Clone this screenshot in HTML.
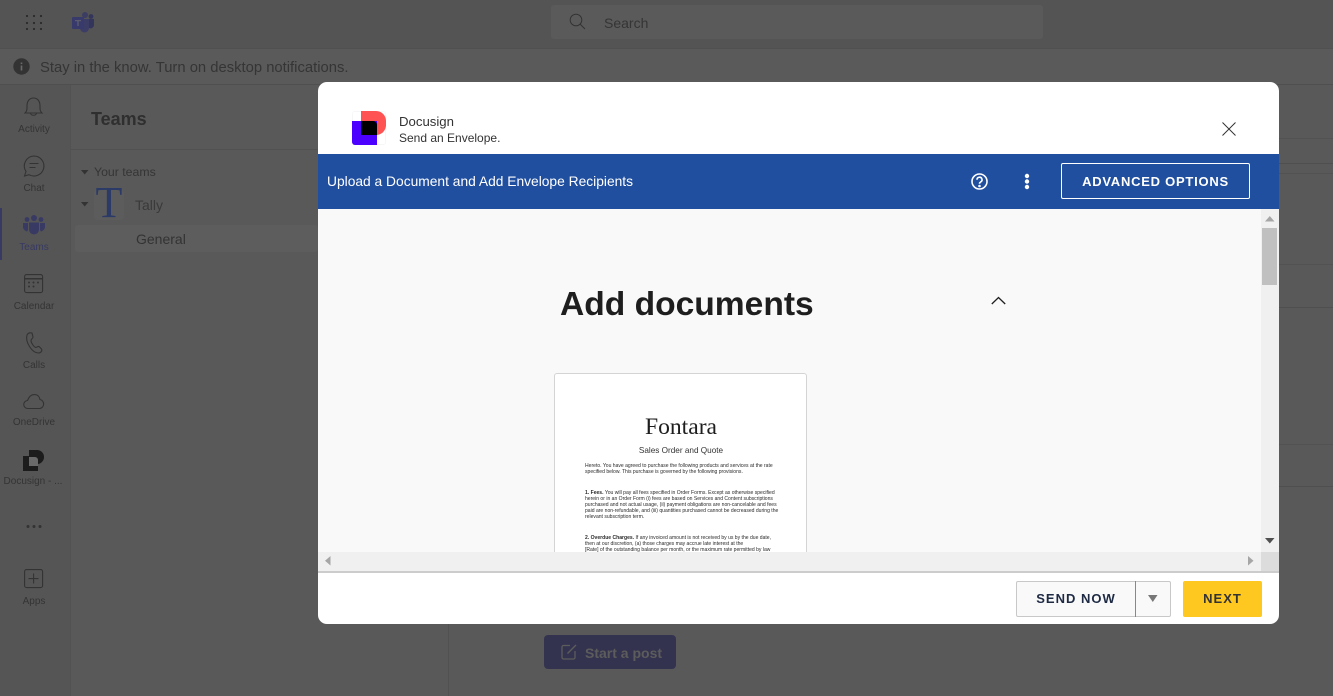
<!DOCTYPE html>
<html><head><meta charset="utf-8"><style>
html,body{margin:0;padding:0}
body{width:1333px;height:696px;overflow:hidden;background:#595959;position:relative;font-family:"Liberation Sans",sans-serif}
div,span{position:absolute;white-space:nowrap}
svg{position:absolute;overflow:visible}
.nav{left:0;width:68px;text-align:center;font-size:10px;color:#343434;line-height:12px}
.dk{color:#2f2f2f}
.doc{left:267px;font-size:5.050px;line-height:5.900px;color:#2a2a2a;filter:blur(.25px)}
</style></head><body>
<div style="left:0;top:0;width:1333px;height:48px;background:#545454;border-bottom:1px solid #505050"></div>
<div style="left:0;top:49px;width:1333px;height:35px;background:#5a5a5a;border-bottom:1px solid #4f4f4f"></div>
<div style="left:0;top:85px;width:70px;height:611px;background:#555;border-right:1px solid #525252"></div>
<div style="left:71px;top:149px;width:378px;height:1px;background:#515151"></div>
<div style="left:448px;top:85px;width:1px;height:611px;background:#515151"></div>
<div style="left:1279px;top:138px;width:54px;height:1px;background:#525252"></div>
<div style="left:1279px;top:163px;width:54px;height:1px;background:#4f4f4f"></div>
<div style="left:1279px;top:173px;width:54px;height:1px;background:#525252"></div>
<div style="left:1279px;top:264px;width:54px;height:1px;background:#525252"></div>
<div style="left:1279px;top:307px;width:54px;height:1px;background:#4f4f4f"></div>
<div style="left:1279px;top:444px;width:54px;height:1px;background:#525252"></div>
<div style="left:1279px;top:486px;width:54px;height:1px;background:#4f4f4f"></div>

<svg style="left:26px;top:15px" width="16" height="16" fill="#2b2b2b"><circle cx="1" cy="1" r="1.100"/><circle cx="8" cy="1" r="1.100"/><circle cx="15" cy="1" r="1.100"/><circle cx="1" cy="8" r="1.100"/><circle cx="8" cy="8" r="1.100"/><circle cx="15" cy="8" r="1.100"/><circle cx="1" cy="14" r="1.100"/><circle cx="8" cy="14" r="1.100"/><circle cx="15" cy="14" r="1.100"/></svg>
<svg style="left:72px;top:12px" width="22" height="20"><circle cx="13" cy="3" r="3" fill="#3c3d62"/><circle cx="19" cy="4.500" r="2.400" fill="#34355a"/><path d="M8 7h9v9a4.500 4.500 0 0 1-9 0z" fill="#3c3d66"/><path d="M17 7h5v6a3.500 3.500 0 0 1-5 3z" fill="#34355a"/><rect x="0" y="5" width="12" height="12" rx="1" fill="#373a6b"/><path d="M3 8h6v1.300H6.700V14H5.300V9.300H3z" fill="#5c5c6e"/></svg>
<div style="left:551px;top:5px;width:492px;height:34px;border-radius:3px;background:#5a5a5a"></div>
<svg style="left:569px;top:13px" width="17" height="17" fill="none" stroke="#333" stroke-width="1"><circle cx="7" cy="7" r="5.800"/><path d="M11 11l5 5"/></svg>
<div style="left:604px;top:14px;font-size:14px;line-height:18px;color:#353535">Search</div>

<svg style="left:13px;top:58px" width="17" height="17"><circle cx="8.500" cy="8.500" r="8.200" fill="#333"/><rect x="7.700" y="7.500" width="1.600" height="5" fill="#6a6a6a"/><rect x="7.700" y="4.500" width="1.600" height="1.600" fill="#6a6a6a"/></svg>
<div style="left:40px;top:59px;font-size:14.800px;line-height:18px;color:#353535">Stay in the know. Turn on desktop notifications.</div>

<svg style="left:23px;top:96px" width="21" height="22" fill="none" stroke="#333" stroke-width="1.100"><path d="M2 17c2-2 2-3 2-7 0-5 2.500-8 6.500-8s6.500 3 6.500 8c0 4 0 5 2 7z"/><path d="M7.500 17c0 3 6 3 6 0"/></svg>
<div class="nav" style="top:124px">Activity</div>
<svg style="left:23px;top:155px" width="22" height="22" fill="none" stroke="#333" stroke-width="1.100"><path d="M11 1a10 10 0 1 1-5 18.700L1.500 21 3 16.500A10 10 0 0 1 11 1z"/><path d="M6.500 8.500h9M6.500 12.500h6"/></svg>
<div class="nav" style="top:183px">Chat</div>
<div style="left:0;top:208px;width:2px;height:52px;background:#383a63"></div>
<svg style="left:23px;top:215px" width="22" height="20" fill="#383a63"><circle cx="11" cy="3" r="3"/><circle cx="4" cy="4.500" r="2.400"/><circle cx="18" cy="4.500" r="2.400"/><path d="M6 7.500h10v7a5 5 0 0 1-10 0z"/><path d="M0 8h5v7l-1 1.500C2 16 0 14 0 12zM22 8h-5v7l1 1.500c2-.5 4-2.500 4-4.500z"/></svg>
<div class="nav" style="top:242px;color:#383a63">Teams</div>
<svg style="left:24px;top:274px" width="20" height="20" fill="none" stroke="#333" stroke-width="1.100"><rect x=".6" y=".6" width="18" height="18" rx="2"/><path d="M.6 4.800h18" stroke-width="1.500"/><g fill="#333" stroke="none"><circle cx="5" cy="8.500" r="1"/><circle cx="9.500" cy="8.500" r="1"/><circle cx="14" cy="8.500" r="1"/><circle cx="5" cy="12.500" r="1"/><circle cx="9.500" cy="12.500" r="1"/></g></svg>
<div class="nav" style="top:301px">Calendar</div>
<svg style="left:25px;top:332px" width="18" height="22" fill="none" stroke="#333" stroke-width="1.100"><path d="M2 3c1-2 3-2.500 5-2l1 4c0 1.500-2 2-2 3.500 0 2 2.500 6 4.500 7 1.500 0 2-1.500 3.500-1l2.500 2.500c1 1.500-.5 4-3 4C7 21 0 10 2 3z"/></svg>
<div class="nav" style="top:360px">Calls</div>
<svg style="left:23px;top:394px" width="22" height="15" fill="none" stroke="#333" stroke-width="1.100"><path d="M5 14.500a4 4 0 0 1-.5-8C6 2.500 8.500.5 11.500.6c3 0 5 2 5.500 4.900a4.600 4.600 0 0 1 0 9z"/></svg>
<div class="nav" style="top:417px">OneDrive</div>
<svg style="left:23px;top:450px" width="21" height="21"><path d="M6 0h8a7 7 0 0 1 7 7 7 7 0 0 1-6 7V6H6z" fill="#1c1c1c"/><path d="M0 6h15v15H0z" fill="#1c1c1c"/><path d="M6 7h6a3 3 0 0 1 3 3v6H6z" fill="#6a6a6a"/></svg>
<div class="nav" style="top:476px;left:-1px">Docusign - ...</div>
<svg style="left:26px;top:524px" width="16" height="5" fill="#333"><circle cx="2" cy="2.500" r="1.500"/><circle cx="8" cy="2.500" r="1.500"/><circle cx="14" cy="2.500" r="1.500"/></svg>
<svg style="left:24px;top:569px" width="20" height="20" fill="none" stroke="#333" stroke-width="1.100"><rect x=".6" y=".6" width="18" height="18" rx="2"/><path d="M9.600 4.500v10M4.500 9.600h10"/></svg>
<div class="nav" style="top:596px">Apps</div>

<div class="dk" style="left:91px;top:108px;font-size:18px;line-height:22px;font-weight:700">Teams</div>
<svg style="left:81px;top:170px" width="8" height="5" fill="#333"><path d="M0 0h7.500L3.700 4.500z"/></svg>
<div style="left:94px;top:165px;font-size:12.300px;line-height:15px;color:#353535">Your teams</div>
<svg style="left:81px;top:202px" width="8" height="5" fill="#333"><path d="M0 0h7.500L3.700 4.500z"/></svg>
<div style="left:94px;top:190px;width:30px;height:30px;background:#5c5c5c;border-radius:3px"></div>
<div style="left:93px;top:180px;width:32px;text-align:center;font-family:'Liberation Serif',serif;font-size:44px;line-height:46px;color:#2b3a66">T</div>
<div style="left:135px;top:197px;font-size:14px;line-height:17px;color:#3a3a3a">Tally</div>
<div style="left:75px;top:225px;width:243px;height:27px;background:#5d5d5d;border-radius:3px"></div>
<div style="left:136px;top:231px;font-size:14px;line-height:17px;color:#333">General</div>

<div style="left:544px;top:635px;width:132px;height:34px;border-radius:4px;background:#33334f"></div>
<svg style="left:561px;top:644px" width="16" height="16" fill="none" stroke="#5c5c5c" stroke-width="1.300"><path d="M9 1.500H2.500A1.500 1.500 0 0 0 1 3v10.500A1.500 1.500 0 0 0 2.500 15h10a1.500 1.500 0 0 0 1.500-1.500V7"/><path d="M6.500 9.500L15 1"/></svg>
<div style="left:585px;top:645px;font-size:14px;line-height:17px;font-weight:700;color:#5c5c5c">Start a post</div>

<!-- modal -->
<div style="left:318px;top:82px;width:961px;height:542px;background:#fff;border-radius:9px;overflow:hidden">
  <svg style="left:34px;top:29px" width="34" height="34">
    <rect x=".25" y=".25" width="33.500" height="33.500" rx="3" fill="#fff" stroke="#eee" stroke-width=".5"/>
    <path d="M9 0h15a10 10 0 0 1 10 10v4a10 10 0 0 1-10 10H9z" fill="#ff5252"/>
    <path d="M0 10h25v24H3a3 3 0 0 1-3-3z" fill="#4c00ff"/>
    <path d="M9 10h12a4 4 0 0 1 4 4v10H9z" fill="#000"/>
  </svg>
  <div style="left:81px;top:31px;font-size:13.200px;line-height:17px;color:#333">Docusign</div>
  <div style="left:81px;top:48px;font-size:12px;line-height:16px;color:#333">Send an Envelope.</div>
  <svg style="left:904px;top:40px" width="14" height="14" fill="none" stroke="#333" stroke-width="1"><path d="M.5.500l13 13M13.500.500l-13 13"/></svg>

  <div style="left:0;top:72px;width:961px;height:55px;background:#214f9f"></div>
  <div style="left:9px;top:91px;font-size:13.800px;line-height:17px;color:#fff">Upload a Document and Add Envelope Recipients</div>
  <svg style="left:653px;top:91px" width="17" height="17" fill="none" stroke="#fff" stroke-width="1.600"><circle cx="8.500" cy="8.500" r="7.500"/><path d="M6 6.700a2.500 2.500 0 1 1 3.700 2.200c-.8.500-1.200.8-1.200 1.800"/><circle cx="8.500" cy="13" r=".5" fill="#fff"/></svg>
  <svg style="left:706px;top:91px" width="6" height="18" fill="#fff"><circle cx="3" cy="3" r="2.200"/><circle cx="3" cy="8.500" r="2.200"/><circle cx="3" cy="14" r="2.200"/></svg>
  <div style="left:743px;top:81px;width:187px;height:34px;border:1px solid #fff;border-radius:2px;text-align:center;font-size:13px;line-height:35px;font-weight:700;letter-spacing:.75px;color:#fff">ADVANCED OPTIONS</div>

  <div style="left:0;top:127px;width:961px;height:362px;background:#f9f9f9;border-bottom:2px solid #ccc;overflow:hidden">
    <div style="left:242px;top:76px;font-size:33.600px;line-height:40px;font-weight:700;color:#1e1e1e">Add documents</div>
    <svg style="left:673px;top:87px" width="15" height="9" fill="none" stroke="#1e1e1e" stroke-width="1.300"><path d="M.8 8L7.500 1.500 14.200 8"/></svg>

    <div style="left:236px;top:164px;width:251px;height:200px;background:#fff;border:1px solid #d4d4d4;border-radius:3px"></div>
    <div style="left:236px;top:204px;width:254px;text-align:center;font-family:'Liberation Serif',serif;font-size:23.600px;line-height:28px;color:#1e1e1e">Fontara</div>
    <div style="left:236px;top:237px;width:254px;text-align:center;font-size:8.200px;line-height:10px;color:#333;filter:blur(.2px)">Sales Order and Quote</div>
    <div class="doc" style="top:255px">Hereto. You have agreed to purchase the following products and services at the rate<br>specified below. This purchase is governed by the following provisions.</div>
    <div class="doc" style="top:282px"><b>1. Fees.</b> You will pay all fees specified in Order Forms. Except as otherwise specified<br>herein or in an Order Form (i) fees are based on Services and Content subscriptions<br>purchased and not actual usage, (ii) payment obligations are non-cancelable and fees<br>paid are non-refundable, and (iii) quantities purchased cannot be decreased during the<br>relevant subscription term.</div>
    <div class="doc" style="top:327px"><b>2. Overdue Charges.</b> If any invoiced amount is not received by us by the due date,<br>then at our discretion, (a) those charges may accrue late interest at the<br>[Rate] of the outstanding balance per month, or the maximum rate permitted by law</div>

    <div style="left:0;top:343px;width:943px;height:19px;background:#f0f0f0"></div>
    <div style="left:943px;top:0;width:18px;height:343px;background:#f0f0f0"></div>
    <div style="left:943px;top:343px;width:18px;height:19px;background:#dcdcdc"></div>
    <div style="left:944px;top:19px;width:15px;height:57px;background:#c0c0c0"></div>
    <svg style="left:947px;top:7px" width="10" height="6" fill="#a6a6a6"><path d="M0 5.500h9.500L4.800 0z"/></svg>
    <svg style="left:947px;top:329px" width="10" height="6" fill="#505050"><path d="M0 0h9.500L4.800 5.500z"/></svg>
    <svg style="left:7px;top:347px" width="6" height="10" fill="#a6a6a6"><path d="M5.500 0v9.500L0 4.800z"/></svg>
    <svg style="left:930px;top:347px" width="6" height="10" fill="#a6a6a6"><path d="M0 0v9.500L5.500 4.800z"/></svg>
  </div>

  <div style="left:698px;top:499px;width:153px;height:34px;border:1px solid #c8c8c8;border-radius:2px;background:#f9f9f9"></div>
  <div style="left:817px;top:499px;width:1px;height:36px;background:#888"></div>
  <div style="left:699px;top:499px;width:118px;text-align:center;font-size:13px;line-height:35px;font-weight:700;letter-spacing:1px;color:#1e2a44">SEND NOW</div>
  <svg style="left:830px;top:513px" width="10" height="8" fill="#777"><path d="M0 0h9.500L4.800 7z"/></svg>
  <div style="left:865px;top:499px;width:79px;height:36px;background:#ffc820;border-radius:2px;text-align:center;font-size:13px;line-height:36px;font-weight:700;letter-spacing:1px;color:#333">NEXT</div>
</div>
</body></html>
